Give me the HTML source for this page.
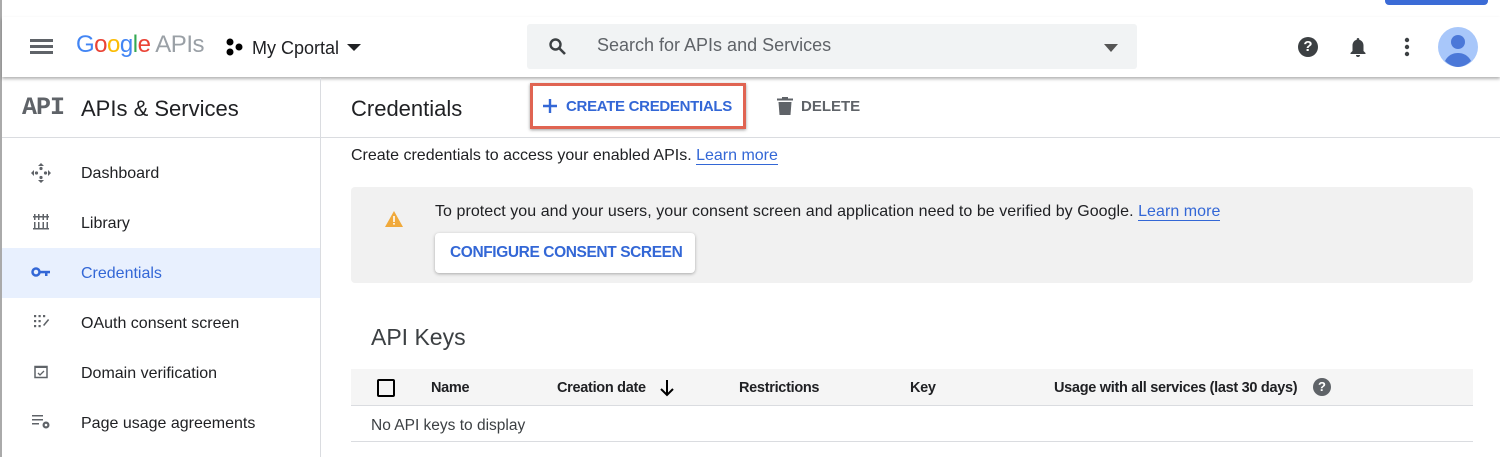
<!DOCTYPE html>
<html><head><style>
*{margin:0;padding:0;box-sizing:border-box}
body{width:1500px;height:457px;overflow:hidden;background:#fff;font-family:"Liberation Sans",Arial,sans-serif;color:#202124;position:relative}
.a{position:absolute;white-space:nowrap}
.nav{font-size:16px;color:#202124}
.th{font-size:14.5px;font-weight:bold;color:#202124;letter-spacing:-0.3px}
</style></head><body>
<div class="a" style="left:0;top:0;width:2px;height:457px;background:#aaa"></div>
<div class="a" style="left:1385px;top:0;width:103px;height:5px;background:#3b6bd6;border-radius:0 0 4px 4px"></div>
<!-- header -->
<div class="a" style="left:2px;top:17px;width:1498px;height:60px;background:#fff;box-shadow:0 2px 3px rgba(0,0,0,.3)"></div>
<div class="a" style="left:30px;top:39px;width:23px;height:3px;background:#5f6368;box-shadow:0 6px 0 #5f6368,0 12px 0 #5f6368"></div>
<div class="a" style="left:76px;top:31px;font-size:24px;letter-spacing:-0.5px"><span style="color:#4285f4">G</span><span style="color:#ea4335">o</span><span style="color:#fbbc05">o</span><span style="color:#4285f4">g</span><span style="color:#34a853">l</span><span style="color:#ea4335">e</span> <span style="color:#9aa0a6">APIs</span></div>
<svg class="a" style="left:226px;top:38px" width="18" height="18"><circle cx="4" cy="4" r="3.5" fill="#000"/><circle cx="13" cy="9" r="3.5" fill="#000"/><circle cx="4" cy="14" r="3.5" fill="#000"/></svg>
<div class="a" style="left:252px;top:38px;font-size:18px">My Cportal</div>
<div class="a" style="left:347px;top:44px;border:7px solid transparent;border-top:7px solid #202124;border-bottom:0"></div>
<div class="a" style="left:527px;top:24px;width:610px;height:45px;background:#f1f3f4;border-radius:3px"></div>
<svg class="a" style="left:548px;top:37px" width="20" height="20"><circle cx="7.5" cy="7.5" r="5" fill="none" stroke="#3c4043" stroke-width="2.4"/><line x1="11" y1="11" x2="17" y2="17" stroke="#3c4043" stroke-width="2.6"/></svg>
<div class="a" style="left:597px;top:35px;font-size:18px;color:#5f6368">Search for APIs and Services</div>
<div class="a" style="left:1104px;top:44px;border:7px solid transparent;border-top:8px solid #555;border-bottom:0"></div>
<div class="a" style="left:1298px;top:37px;width:20px;height:20px;border-radius:50%;background:#3c4043;color:#fff;font-size:15px;font-weight:bold;text-align:center;line-height:20px">?</div>
<svg class="a" style="left:1348px;top:36px" width="20" height="22"><path d="M10 2c-.8 0-1.3.6-1.3 1.3v.5C6 4.4 4.5 7 4.5 9.5V15L2.5 17v1h15v-1l-2-2V9.5c0-2.5-1.5-5-4.2-5.7v-.5C11.3 2.6 10.8 2 10 2zM8 19a2 2 0 0 0 4 0z" fill="#3c4043"/></svg>
<svg class="a" style="left:1403px;top:37px" width="8" height="20"><circle cx="4" cy="3" r="2.2" fill="#3c4043"/><circle cx="4" cy="10" r="2.2" fill="#3c4043"/><circle cx="4" cy="17" r="2.2" fill="#3c4043"/></svg>
<svg class="a" style="left:1438px;top:27px" width="40" height="40"><circle cx="20" cy="20" r="20" fill="#a8c7fa"/><circle cx="20" cy="15" r="7" fill="#4b78d8"/><path d="M7 34c3-6 8-8 13-8s10 2 13 8c-4 4-9 6-13 6s-9-2-13-6z" fill="#4b78d8"/></svg>
<!-- sidebar -->
<div class="a" style="left:320px;top:78px;width:1px;height:379px;background:#dadce0"></div>
<div class="a" style="left:2px;top:137px;width:318px;height:1px;background:#dadce0"></div>
<div class="a" style="left:22px;top:93px;font-family:'Liberation Mono',monospace;font-weight:bold;font-size:25px;color:#5f6368;letter-spacing:-1px">API</div>
<div class="a" style="left:81px;top:96px;font-size:22px">APIs &amp; Services</div>
<div class="a" style="left:321px;top:137px;width:1179px;height:1px;background:#dadce0"></div>
<svg class="a" style="left:31px;top:163px" width="20" height="20" fill="#5f6368"><path d="M10 0l3 3h-6zM10 20l3-3h-6zM0 10l3-3v6zM20 10l-3-3v6z"/><circle cx="10" cy="5.5" r="1.6"/><circle cx="10" cy="14.5" r="1.6"/><circle cx="5.5" cy="10" r="1.6"/><circle cx="14.5" cy="10" r="1.6"/></svg>
<div class="a nav" style="left:81px;top:165px">Dashboard</div>
<svg class="a" style="left:33px;top:214px" width="16" height="16" fill="#5f6368"><rect x="0" y="2" width="16" height="1.5"/><rect x="1" y="0" width="1.5" height="6"/><rect x="5" y="0" width="1.5" height="6"/><rect x="9.5" y="0" width="1.5" height="6"/><rect x="13.5" y="0" width="1.5" height="6"/><rect x="0" y="14" width="16" height="1.5"/><rect x="1" y="8" width="1.5" height="7"/><rect x="5" y="8" width="1.5" height="7"/><rect x="9.5" y="8" width="1.5" height="7"/><rect x="13.5" y="8" width="1.5" height="7"/></svg>
<div class="a nav" style="left:81px;top:215px">Library</div>
<div class="a" style="left:2px;top:248px;width:318px;height:50px;background:#e8f0fe"></div>
<svg class="a" style="left:31px;top:266px" width="20" height="12"><circle cx="5" cy="6" r="3.5" fill="none" stroke="#3367d6" stroke-width="2.5"/><rect x="8" y="4.8" width="11" height="2.5" fill="#3367d6"/><rect x="14" y="6" width="2.5" height="4" fill="#3367d6"/></svg>
<div class="a nav" style="left:81px;top:265px;color:#3367d6">Credentials</div>
<svg class="a" style="left:34px;top:315px" width="16" height="14" fill="#5f6368"><rect x="0" y="0" width="2.2" height="2.2"/><rect x="4.5" y="0" width="2.2" height="2.2"/><rect x="9" y="0" width="2.2" height="2.2"/><rect x="0" y="5" width="2.2" height="2.2"/><rect x="4.5" y="5" width="2.2" height="2.2"/><rect x="0" y="10" width="2.2" height="2.2"/><rect x="4.5" y="10" width="2.2" height="2.2"/><path d="M9 10l5-6 1.2 1-5 6z"/></svg>
<div class="a nav" style="left:81px;top:315px">OAuth consent screen</div>
<svg class="a" style="left:34px;top:365px" width="14" height="14"><rect x="1" y="1.5" width="12" height="11" fill="none" stroke="#5f6368" stroke-width="1.5"/><rect x="1" y="1" width="12" height="2" fill="#5f6368"/><path d="M4 8l2 2 4-4" fill="none" stroke="#5f6368" stroke-width="1.3"/></svg>
<div class="a nav" style="left:81px;top:365px">Domain verification</div>
<svg class="a" style="left:32px;top:414px" width="20" height="16" fill="#5f6368"><rect x="0" y="1" width="11" height="1.5"/><rect x="0" y="5" width="11" height="1.5"/><rect x="0" y="9" width="7" height="1.5"/><circle cx="14" cy="11" r="3.5"/><circle cx="14" cy="11" r="1.3" fill="#fff"/></svg>
<div class="a nav" style="left:81px;top:415px">Page usage agreements</div>
<!-- main -->
<div class="a" style="left:351px;top:96px;font-size:22px">Credentials</div>
<div class="a" style="left:530px;top:83px;width:216px;height:46px;border:3px solid #e06452;box-shadow:0 1px 3px rgba(0,0,0,.4)"></div>
<svg class="a" style="left:542px;top:98px" width="16" height="16"><path d="M8 1v14M1 8h14" stroke="#3367d6" stroke-width="2.4"/></svg>
<div class="a" style="left:566px;top:98px;font-size:15px;color:#3367d6;font-weight:bold;letter-spacing:-0.3px">CREATE CREDENTIALS</div>
<svg class="a" style="left:777px;top:97px" width="16" height="18" fill="#5f6368"><rect x="0" y="1.5" width="16" height="2"/><rect x="5" y="0" width="6" height="2"/><path d="M1.5 5h13l-1 13h-11z"/></svg>
<div class="a" style="left:801px;top:98px;font-size:15px;color:#5f6368;font-weight:bold">DELETE</div>
<div class="a" style="left:351px;top:147px;font-size:16px">Create credentials to access your enabled APIs. <span style="color:#3367d6;border-bottom:1px solid #3367d6">Learn more</span></div>
<div class="a" style="left:351px;top:187px;width:1122px;height:96px;background:#f1f1f1;border-radius:4px"></div>
<svg class="a" style="left:385px;top:211px" width="18" height="16"><path d="M9 0L18 16H0z" fill="#f0a93b"/><rect x="8.2" y="5" width="1.6" height="6" fill="#fff"/><rect x="8.2" y="12" width="1.6" height="1.6" fill="#fff"/></svg>
<div class="a" style="left:435px;top:203px;font-size:16px;letter-spacing:0.05px">To protect you and your users, your consent screen and application need to be verified by Google. <span style="color:#3367d6;border-bottom:1px solid #3367d6">Learn more</span></div>
<div class="a" style="left:435px;top:233px;width:260px;height:40px;background:#fff;border-radius:4px;box-shadow:0 1px 3px rgba(0,0,0,.3)"></div>
<div class="a" style="left:450px;top:244px;font-size:15.5px;color:#3367d6;font-weight:bold;letter-spacing:-0.4px">CONFIGURE CONSENT SCREEN</div>
<div class="a" style="left:371px;top:324px;font-size:23px;color:#3c4043">API Keys</div>
<div class="a" style="left:351px;top:369px;width:1122px;height:37px;background:#f5f5f5;border-bottom:1px solid #dadce0"></div>
<div class="a" style="left:377px;top:379px;width:18px;height:18px;border:2.5px solid #000;border-radius:2px"></div>
<div class="a th" style="left:431px;top:380px">Name</div>
<div class="a th" style="left:557px;top:380px">Creation date</div>
<svg class="a" style="left:659px;top:379px" width="16" height="18"><path d="M8 1v15M2 10l6 6 6-6" fill="none" stroke="#000" stroke-width="2"/></svg>
<div class="a th" style="left:739px;top:380px">Restrictions</div>
<div class="a th" style="left:910px;top:380px">Key</div>
<div class="a th" style="left:1054px;top:380px">Usage with all services (last 30 days)</div>
<div class="a" style="left:1313px;top:378px;width:18px;height:18px;border-radius:50%;background:#5f6368;color:#fff;font-size:13px;font-weight:bold;text-align:center;line-height:18px">?</div>
<div class="a" style="left:371px;top:417px;font-size:15.5px;color:#3c4043">No API keys to display</div>
<div class="a" style="left:351px;top:441px;width:1122px;height:1px;background:#dadce0"></div>
</body></html>
